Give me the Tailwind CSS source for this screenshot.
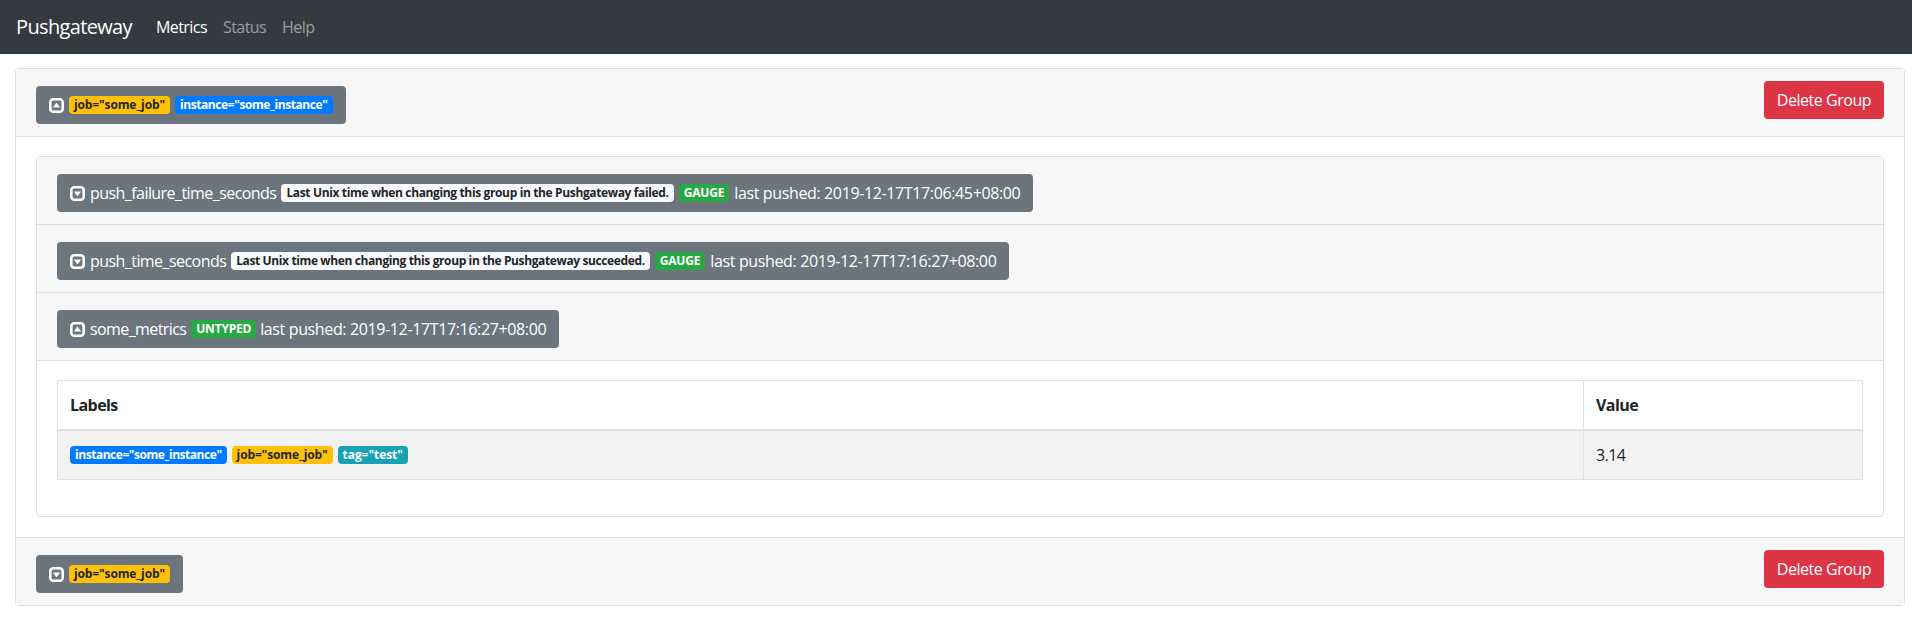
<!DOCTYPE html>
<html lang="en">
<head>
<meta charset="utf-8">
<title>Pushgateway</title>
<script src="https://cdn.jsdelivr.net/npm/@tailwindcss/browser@4"></script>
</head>
<body class="bg-white text-[#212529] text-[16px] leading-6 font-['Open_Sans','Noto_Sans',sans-serif] tracking-[-0.56px]">

<!-- navbar -->
<nav class="h-[54px] bg-[#343a40] px-4 flex items-center">
  <a class="text-[20px] text-white mr-4 tracking-[-0.65px]">Pushgateway</a>
  <a class="px-2 text-white">Metrics</a>
  <a class="px-2 text-white/50">Status</a>
  <a class="px-2 text-white/50">Help</a>
</nav>

<main class="mt-[14px] ml-[15px] mr-[7px]">
  <div class="border border-[#dfdfdf] rounded-[4px]">

    <!-- group some_job / some_instance -->
    <div class="flex justify-between items-start bg-[#f7f7f7] border-b border-[#dfdfdf] px-5 pt-[12px] pb-[12px] h-[68px]">
      <div class="mt-[5px] h-[38px] bg-[#6c757d] rounded-[4px] px-[13px] flex items-center gap-[5px] text-white">
        <svg class="w-[15px] h-[15px]" viewBox="0 0 15 15"><rect x="1.3" y="1.3" width="12.4" height="12.4" rx="3" fill="#6c757d" stroke="#fff" stroke-width="2.6"/><path d="M7.5 4.6 11.2 9.6H3.8z" fill="#fff"/></svg>
        <span class="bg-[#ffc107] text-[#212529] text-[12px] leading-[18px] font-bold px-[5px] rounded-[4px] tracking-[-0.13px]">job="some_job"</span>
        <span class="bg-[#007bff] text-white text-[12px] leading-[18px] font-bold px-[5px] rounded-[4px] tracking-[-0.42px]">instance="some_instance"</span>
      </div>
      <button class="w-[120px] h-[38px] bg-[#dc3545] text-white rounded-[4px] tracking-[-0.46px]">Delete Group</button>
    </div>

    <div class="px-5 pt-[19px] pb-5 border-b border-[#dfdfdf]">
      <div class="border border-[#dfdfdf] rounded-[4px]">

        <div class="bg-[#f7f7f7] border-b border-[#dfdfdf] px-5 pt-[17px] pb-[12px]">
          <div class="inline-flex h-[38px] bg-[#6c757d] rounded-[4px] px-[13px] items-center gap-[5px] text-white">
            <svg class="w-[15px] h-[15px]" viewBox="0 0 15 15"><rect x="1.3" y="1.3" width="12.4" height="12.4" rx="3" fill="#6c757d" stroke="#fff" stroke-width="2.6"/><path d="M7.5 10.4 11.2 5.4H3.8z" fill="#fff"/></svg>
            <span>push_failure_time_seconds</span>
            <span class="bg-[#f8f9fa] text-[#212529] text-[12px] leading-[18px] font-bold px-[5px] rounded-[4px] tracking-[-0.36px]">Last Unix time when changing this group in the Pushgateway failed.</span>
            <span class="bg-[#28a745] text-white text-[12px] leading-[18px] font-bold px-[5px] rounded-[4px] tracking-[-0.16px]">GAUGE</span>
            <span class="tracking-[-0.37px]">last pushed: 2019-12-17T17:06:45+08:00</span>
          </div>
        </div>

        <div class="bg-[#f7f7f7] border-b border-[#dfdfdf] px-5 pt-[17px] pb-[12px]">
          <div class="inline-flex h-[38px] bg-[#6c757d] rounded-[4px] px-[13px] items-center gap-[5px] text-white">
            <svg class="w-[15px] h-[15px]" viewBox="0 0 15 15"><rect x="1.3" y="1.3" width="12.4" height="12.4" rx="3" fill="#6c757d" stroke="#fff" stroke-width="2.6"/><path d="M7.5 10.4 11.2 5.4H3.8z" fill="#fff"/></svg>
            <span>push_time_seconds</span>
            <span class="bg-[#f8f9fa] text-[#212529] text-[12px] leading-[18px] font-bold px-[5px] rounded-[4px] tracking-[-0.38px]">Last Unix time when changing this group in the Pushgateway succeeded.</span>
            <span class="bg-[#28a745] text-white text-[12px] leading-[18px] font-bold px-[5px] rounded-[4px] tracking-[-0.16px]">GAUGE</span>
            <span class="tracking-[-0.37px]">last pushed: 2019-12-17T17:16:27+08:00</span>
          </div>
        </div>

        <div class="bg-[#f7f7f7] border-b border-[#dfdfdf] px-5 pt-[17px] pb-[12px]">
          <div class="inline-flex h-[38px] bg-[#6c757d] rounded-[4px] px-[13px] items-center gap-[5px] text-white">
            <svg class="w-[15px] h-[15px]" viewBox="0 0 15 15"><rect x="1.3" y="1.3" width="12.4" height="12.4" rx="3" fill="#6c757d" stroke="#fff" stroke-width="2.6"/><path d="M7.5 4.6 11.2 9.6H3.8z" fill="#fff"/></svg>
            <span class="tracking-[-0.6px]">some_metrics</span>
            <span class="bg-[#28a745] text-white text-[12px] leading-[18px] font-bold px-[5px] rounded-[4px] tracking-[-0.21px]">UNTYPED</span>
            <span class="-ml-px tracking-[-0.37px]">last pushed: 2019-12-17T17:16:27+08:00</span>
          </div>
        </div>

        <!-- metric samples -->
        <div class="px-5 pt-[19px] pb-[36px]">
          <table class="w-full border-collapse border border-[#dee2e6]">
            <thead>
              <tr>
                <th class="w-[1526px] text-left font-bold p-3 border border-b-2 border-[#dee2e6]">Labels</th>
                <th class="text-left font-bold p-3 border border-b-2 border-[#dee2e6]">Value</th>
              </tr>
            </thead>
            <tbody>
              <tr class="bg-[#f2f2f2]">
                <td class="p-3 border border-[#dee2e6]">
                  <div class="flex items-center gap-[5px]">
                    <span class="bg-[#007bff] text-white text-[12px] leading-[18px] font-bold px-[5px] rounded-[4px] tracking-[-0.46px]">instance="some_instance"</span>
                    <span class="bg-[#ffc107] text-[#212529] text-[12px] leading-[18px] font-bold px-[5px] rounded-[4px] tracking-[-0.13px]">job="some_job"</span>
                    <span class="bg-[#17a2b8] text-white text-[12px] leading-[18px] font-bold px-[5px] rounded-[4px] tracking-[-0.06px]">tag="test"</span>
                  </div>
                </td>
                <td class="p-3 border border-[#dee2e6]">3.14</td>
              </tr>
            </tbody>
          </table>
        </div>
      </div>
    </div>

    <!-- group some_job -->
    <div class="flex justify-between items-start bg-[#f7f7f7] px-5 pt-[12px] pb-[12px] h-[67px]">
      <div class="mt-[5px] h-[38px] bg-[#6c757d] rounded-[4px] px-[13px] flex items-center gap-[5px] text-white">
        <svg class="w-[15px] h-[15px]" viewBox="0 0 15 15"><rect x="1.3" y="1.3" width="12.4" height="12.4" rx="3" fill="#6c757d" stroke="#fff" stroke-width="2.6"/><path d="M7.5 10.4 11.2 5.4H3.8z" fill="#fff"/></svg>
        <span class="bg-[#ffc107] text-[#212529] text-[12px] leading-[18px] font-bold px-[5px] rounded-[4px] tracking-[-0.13px]">job="some_job"</span>
      </div>
      <button class="w-[120px] h-[38px] bg-[#dc3545] text-white rounded-[4px] tracking-[-0.46px]">Delete Group</button>
    </div>
  </div>
</main>
</body>
</html>
